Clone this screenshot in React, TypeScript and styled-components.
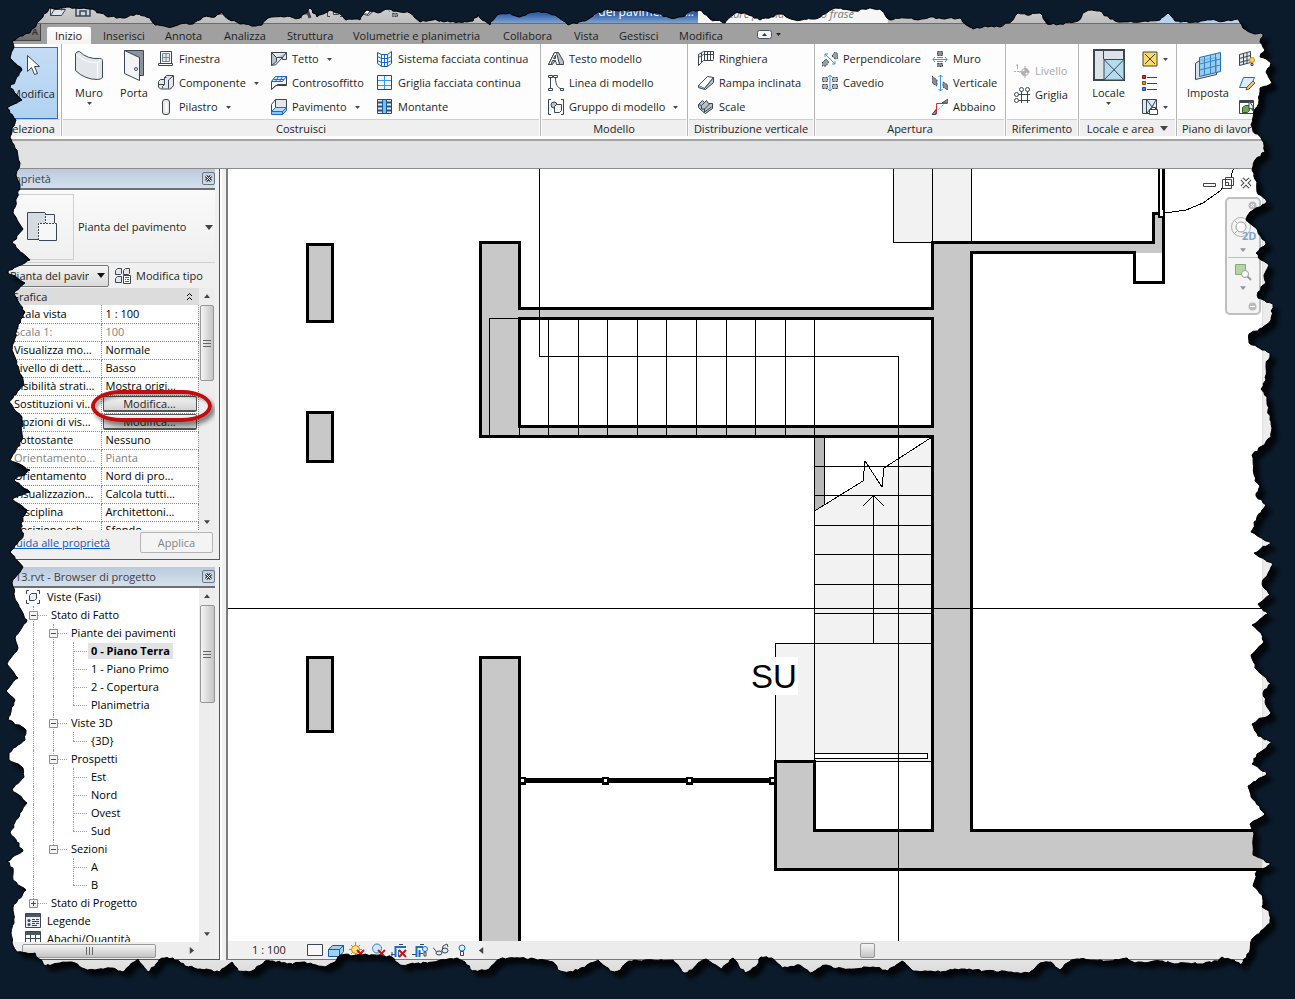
import React from "react";
import styled, { createGlobalStyle, css } from "styled-components";

const GlobalStyle = createGlobalStyle`
  * { box-sizing: border-box; }
  body { margin: 0; background: #0b1b2b; }
  body, button, select, input { font-family: "Open Sans", "Noto Sans", sans-serif; font-size: 11px; line-height: 16px; color: #1e1e1e; }
  button { border: 0; background: none; padding: 0; white-space: nowrap; }
`;

/* ---------- frame ---------- */

const Page = styled.div`
  position: relative;
  display: flex;
  flex-direction: column;
  height: 100vh;
  min-height: 720px;
  overflow: hidden;
  background: #f0f0f0;
`;

const TornOverlay = styled.svg`
  position: absolute;
  inset: 0;
  width: 100%;
  height: 100%;
  pointer-events: none;
`;

/* ---------- title bar and tabs ---------- */

const TitleBar = styled.header`
  display: flex;
  align-items: flex-end;
  flex: none;
  height: 24px;
  padding-left: 50px;
  background: linear-gradient(#d8d8d8, #bdbdbd);
  border-bottom: 1px solid #6c6c6c;
  overflow: hidden;
`;

const QuickAccess = styled.div`
  display: flex;
  align-items: flex-start;
  flex: none;
  width: 438px;
  height: 22px;
`;

const TitleGap = styled.span<{ $w: number }>`
  flex: none;
  width: ${(p) => p.$w}px;
`;

const DocTitle = styled.div`
  flex: none;
  width: 210px;
  height: 23px;
  padding: 4px 4px 0 12px;
  text-align: right;
  color: #fff;
  font-size: 12px;
  white-space: nowrap;
  overflow: hidden;
  background: linear-gradient(#1b4a98, #2f5fa8 60%, #7ea3cf);
`;

const SearchBox = styled.input`
  flex: none;
  width: 190px;
  height: 23px;
  border: 0;
  padding: 4px 34px 0 0;
  text-align: right;
  background: #f6f6f6;
  &::placeholder { font-style: italic; color: #777; }
`;

const TitleSpacer = styled.div`
  flex: 1;
`;

const WindowControls = styled.div`
  flex: none;
  width: 138px;
  height: 23px;
  background: #b9d3ef;
`;

const TabBar = styled.nav`
  display: flex;
  align-items: flex-end;
  flex: none;
  height: 20px;
  background: #a0a0a0;
`;

const AppMenu = styled.button`
  align-self: flex-start;
  width: 41px;
  height: 17px;
  margin-right: 6px;
  padding-right: 2px;
  text-align: right;
  font-size: 9px;
  font-weight: 700;
  color: #333;
  background: linear-gradient(#8b8b8b, #6d6d6d);
  border-right: 1px solid #444;
  border-bottom: 1px solid #444;
`;

const Tab = styled.button<{ $w: number; $active?: boolean }>`
  width: ${(p) => p.$w}px;
  height: 17px;
  text-align: left;
  padding-left: 8px;
  ${(p) => p.$active && css`
    width: 44px;
    margin-right: ${p.$w - 44}px;
    background: linear-gradient(#fdfdfd, #f3f3f3);
    border-radius: 2px 2px 0 0;
  `}
`;

const RibbonToggle = styled.button`
  display: flex;
  align-items: center;
  gap: 4px;
  height: 20px;
`;

/* ---------- ribbon ---------- */

const Ribbon = styled.section`
  display: flex;
  flex: none;
  height: 97px;
  padding-bottom: 3px;
  background: #fdfdfd;
  border-bottom: 2px solid #a3a3a3;
`;

const Panel = styled.div<{ $w?: number }>`
  display: flex;
  flex-direction: column;
  ${(p) => (p.$w ? `flex: none; width: ${p.$w}px;` : "flex: 1;")}
  border-right: 1px solid #b4b4b4;
  overflow: hidden;
`;

const PanelBody = styled.div<{ $cols: string; $inset?: number }>`
  display: grid;
  grid-template-columns: ${(p) => p.$cols};
  flex: 1;
  padding: 3px 0 0 ${(p) => p.$inset ?? 0}px;
`;

const PanelLabel = styled.div<{ $left?: boolean }>`
  display: flex;
  align-items: center;
  justify-content: ${(p) => (p.$left ? "flex-start" : "center")};
  gap: 6px;
  height: 17px;
  margin: 0 1px;
  padding: 1px 4px 0;
  background: #efefef;
  border-top: 1px solid #cfcfcf;
  white-space: nowrap;
`;

const ToolColumn = styled.div<{ $tight?: boolean; $center?: boolean }>`
  display: flex;
  flex-direction: column;
  justify-content: ${(p) => (p.$center ? "center" : "flex-start")};
  padding-left: ${(p) => (p.$tight ? 0 : 6)}px;
`;

const ToolButton = styled.button<{ $disabled?: boolean }>`
  display: flex;
  align-items: center;
  gap: 5px;
  height: 24px;
  ${(p) => p.$disabled && css`color: #a9a9a9;`}
`;

const ToolLabel = styled.span<{ $menu?: boolean }>`
  padding-right: ${(p) => (p.$menu ? 3 : 0)}px;
`;

const BigButton = styled.button<{ $selected?: boolean }>`
  display: flex;
  flex-direction: column;
  align-items: center;
  height: 72px;
  padding-top: 2px;
  ${(p) =>
    p.$selected &&
    css`
      padding-left: 8px;
      background: linear-gradient(#c4dcf4, #b0d2f2);
      border: 1px solid #2c6fbf;
    `}
`;

const BigLabel = styled.span`
  margin: 4px 0 1px;
`;

const OptionsBar = styled.div`
  flex: none;
  height: 28px;
  background: #e1e2e4;
  border-bottom: 1px solid #8b8b8b;
`;

/* ---------- workspace ---------- */

const Workspace = styled.main`
  display: flex;
  flex: 1;
  min-height: 0;
`;

const Dock = styled.aside`
  display: flex;
  flex-direction: column;
  flex: none;
  gap: 7px;
  width: 220px;
`;

const DockPanel = styled.section<{ $h?: number }>`
  display: flex;
  flex-direction: column;
  min-height: 0;
  ${(p) => (p.$h ? `flex: none; height: ${p.$h}px;` : "flex: 1;")}
  padding-right: 4px;
  border-right: 1px solid #555;
  border-bottom: 1px solid #555;
  background: #f0f0f0;
`;

const DockTitle = styled.h2<{ $pad: number }>`
  display: flex;
  align-items: center;
  justify-content: space-between;
  flex: none;
  height: 21px;
  margin: 0;
  padding: 0 0 0 ${(p) => p.$pad}px;
  font-size: 11px;
  font-weight: 400;
  color: #404040;
  background: linear-gradient(#bccbdc, #d3e1ee);
  border-bottom: 2px solid #6f6f6f;
`;

const CloseButton = styled.button`
  display: flex;
  align-items: center;
  justify-content: center;
  width: 13px;
  height: 13px;
  border: 1px solid #6a7684;
  border-radius: 2px;
`;

const TypeSelector = styled.div`
  display: flex;
  align-items: center;
  flex: none;
  height: 73px;
  padding: 2px 2px 0 0;
  border-bottom: 1px solid #cfcfcf;
  background: linear-gradient(#fafafa, #efefef);
`;

const TypePreview = styled.div`
  display: flex;
  align-items: center;
  width: 74px;
  height: 66px;
  padding-left: 24px;
  border: 1px solid #cfcfcf;
`;

const TypeName = styled.span`
  flex: 1;
  padding-left: 4px;
`;

const InstanceRow = styled.div`
  display: flex;
  align-items: center;
  flex: none;
  gap: 6px;
  height: 25px;
  padding-left: 8px;
`;

const SelectWrap = styled.label`
  position: relative;
  display: flex;
  align-items: center;
  svg { position: absolute; right: 4px; pointer-events: none; }
`;

const InstanceSelect = styled.select`
  appearance: none;
  width: 101px;
  height: 22px;
  padding: 0 19px 0 1px;
  border: 1px solid #777;
  border-radius: 2px;
  background: linear-gradient(#f4f4f4, #dadada);
`;

const PropArea = styled.div`
  display: flex;
  flex: 1;
  min-height: 0;
  overflow: hidden;
`;

const PropList = styled.div`
  position: relative;
  flex: 1;
  background: #fff;
`;

const PropTable = styled.table`
  width: 100%;
  table-layout: fixed;
  border-collapse: collapse;
`;

const GroupHead = styled.th`
  height: 17px;
  padding: 0 5px 0 11px;
  background: #dcdcdc;
  text-align: left;
  font-weight: 400;
  > div { display: flex; align-items: center; justify-content: space-between; }
`;

const PropCell = styled.td<{ $dim?: boolean; $label?: boolean }>`
  height: 18px;
  padding: ${(p) => (p.$label ? "0 2px 0 14px" : "0 1px 0 4px")};
  border-bottom: 1px dotted #888;
  border-right: 1px dotted #888;
  color: ${(p) => (p.$dim ? "#808080" : "#000")};
  line-height: 16px;
  white-space: nowrap;
  overflow: hidden;
`;

const EditButton = styled.button`
  display: block;
  width: 94px;
  height: 16px;
  margin-left: -3px;
  line-height: 13px;
  border: 1px solid #555;
  border-bottom-width: 2px;
  border-radius: 2px;
  background: linear-gradient(#f2f2f2, #d4d4d4);
`;

const Highlight = styled.div`
  position: absolute;
  left: 91px;
  top: 102px;
  width: 121px;
  height: 32px;
  border: 4px solid #c00d0d;
  border-radius: 30px / 16px;
  box-shadow: 3px 4px 4px rgba(0, 0, 0, 0.45), inset 3px 3px 3px rgba(0, 0, 0, 0.3);
  pointer-events: none;
`;

const PropFooter = styled.div`
  display: flex;
  align-items: center;
  justify-content: space-between;
  flex: none;
  height: 29px;
  padding: 0 2px 4px 8px;
  a { color: #0a5bc4; }
`;

const ApplyButton = styled.button`
  width: 73px;
  height: 21px;
  border: 1px solid #b5b5b5;
  border-radius: 2px;
  background: #f4f4f4;
  color: #838383;
`;

const VScroll = styled.div`
  display: flex;
  flex-direction: column;
  align-items: center;
  flex: none;
  width: 16px;
  padding: 6px 0;
  gap: 7px;
  background: #ededed;
`;

const Thumb = styled.div<{ $w: number; $h: number; $side?: boolean }>`
  display: flex;
  align-items: center;
  justify-content: center;
  width: ${(p) => p.$w}px;
  height: ${(p) => p.$h}px;
  border: 1px solid #979797;
  border-radius: 2px;
  background: linear-gradient(${(p) => (p.$side ? "90deg" : "180deg")}, #f5f5f5, #dcdcdc 50%, #c4c4c8);
`;

const Push = styled.div`
  flex: 1;
`;

const HScroll = styled.div<{ $h: number }>`
  display: flex;
  align-items: center;
  flex: none;
  height: ${(p) => p.$h}px;
  padding: 0 20px 0 22px;
  background: #ededed;
`;

/* ---------- project tree ---------- */

const TreeArea = styled.div`
  display: flex;
  flex: 1;
  min-height: 0;
  background: #fff;
  overflow: hidden;
`;

const TreeList = styled.ul`
  flex: 1;
  margin: 0;
  padding: 0;
  list-style: none;
`;

const TreeRow = styled.li<{ $root?: boolean }>`
  display: flex;
  align-items: center;
  gap: ${(p) => (p.$root ? 6 : 0)}px;
  height: 18px;
  padding-left: ${(p) => (p.$root ? 25 : 33)}px;
  white-space: nowrap;
`;

const guideHeight = { "|": "100%", T: "100%", L: "50%", " ": "0" } as const;
type Guide = keyof typeof guideHeight;

const GuideCell = styled.span<{ $kind: Guide; $end: boolean }>`
  position: relative;
  width: ${(p) => (p.$end ? 18 : 20)}px;
  height: 18px;
  &::before {
    content: "";
    position: absolute;
    left: 0;
    top: 0;
    height: ${(p) => guideHeight[p.$kind]};
    border-left: ${(p) => (p.$kind === " " ? 0 : 1)}px dotted #9c9c9c;
  }
  &::after {
    content: "";
    position: absolute;
    left: 0;
    top: 9px;
    width: ${(p) => (p.$end ? 14 : 0)}px;
    border-top: 1px dotted #9c9c9c;
  }
`;

const Expander = styled.button`
  position: absolute;
  z-index: 1;
  left: -4px;
  top: 5px;
  display: flex;
  width: 9px;
  height: 9px;
`;

const TreeText = styled.span<{ $current?: boolean }>`
  color: #000;
  ${(p) => p.$current && css`margin-left: -3px; padding: 0 3px; font-weight: 700; background: #e2e2e2;`}
`;

/* ---------- drawing view ---------- */

const Splitter = styled.div`
  flex: none;
  width: 8px;
  background: #f0f0f0;
  border-left: 2px solid #fff;
  border-right: 2px solid #7d7d7d;
`;

const View = styled.section`
  display: flex;
  flex-direction: column;
  flex: 1;
  min-width: 0;
`;

const ViewArea = styled.div`
  position: relative;
  display: flex;
  flex: 1;
  min-height: 0;
`;

const Plan = styled.svg`
  flex: 1;
  min-width: 0;
  height: 100%;
  background: #fff;
`;

const SideScroll = styled.div`
  flex: none;
  width: 33px;
  background: #ececec;
  border-left: 1px solid #dedede;
`;

const ViewButtons = styled.div`
  position: absolute;
  right: 43px;
  top: 8px;
  display: flex;
  align-items: center;
  gap: 6px;
  button { display: flex; }
`;

const NavBar = styled.div`
  position: absolute;
  right: 34px;
  top: 28px;
  display: flex;
  flex-direction: column;
  align-items: center;
  gap: 5px;
  width: 36px;
  height: 118px;
  padding: 2px 0;
  border: 2px solid #bfbfbf;
  border-radius: 5px;
  background: rgba(243, 243, 243, 0.95);
  button { display: flex; }
`;

const NavCorner = styled.button`
  align-self: flex-end;
  margin-right: 2px;
`;

const NavRule = styled.div`
  width: 30px;
  border-top: 1px solid #bfbfbf;
`;

const ViewBar = styled.div`
  display: flex;
  align-items: center;
  flex: none;
  height: 19px;
  padding-left: 24px;
  background: #f0f0f0;
  border-bottom: 1px solid #777;
`;

const ScaleButton = styled.button`
  width: 55px;
  text-align: left;
`;

const ViewIcons = styled.div`
  display: flex;
  align-items: center;
  width: 171px;
  gap: 5px;
  height: 18px;
  button { display: flex; }
`;

const ViewTrack = styled.div`
  display: flex;
  align-items: center;
  justify-content: center;
  flex: 1;
  height: 18px;
  padding-right: 46px;
  background: #ececec;
`;

const StatusBar = styled.footer`
  flex: none;
  height: 39px;
  background: linear-gradient(#e4e4e4, #c9c9c9);
`;

/* ---------- icons ---------- */

const D = "#3b4652";
const B = "#1a6fc4";
const L = "#e4e8ec";
const S = "#b9c1c9";

const glyphs: Record<string, React.ReactNode> = {
  finestra: <g fill="#fff" stroke={D}><path d="M2.5.5h11v12h-11z" /><path d="M.5 12.500h14v2H.5z" /><path d="M4.5 2.500h7v8h-7z" fill={L} stroke="#7b8793" /><path d="M8 2.500v8M4.500 6.500h7" stroke="#7b8793" /></g>,
  componente: <g fill={L} stroke={D}><path d="M.5 6.500l2-2h4v-2l2-2h7v10l-3 3.500h-10l-2-2z" /><path d="M6.500 4.500v5h-6M6.500 9.500l-2 2v2M8.500 2.500h-2v2M10.500 5v8.500M10.500 5l4.500-4" fill="none" /></g>,
  pilastro: <g fill={L} stroke={D}><rect x="4.500" y=".5" width="7" height="15" rx="2.500" /><path d="M8.500 3v10" stroke="#fff" strokeWidth="2" /></g>,
  tetto: <g stroke={D}><path d="M.5 1.500h15v7h-4v-2l-7 7.500h-4z" fill={L} /><path d="M.5 1.500l5 5v4l-5 4zM5.500 6.500h6l4-5" fill={S} /></g>,
  controsoffitto: <g stroke={D}><path d="M.5 14.500v-8l4-5h11v8h-9z" fill="#f1f3f5" /><path d="M.5 6.500l4-5h11l-4 5z" fill="#d5e9f8" stroke={B} /><path d="M3 4.500h10M7.500 1.500l-3 5M11.500 1.500l-3 5" stroke={B} fill="none" /><path d="M.5 14.500l4-4h11V2" fill="none" /></g>,
  pavimento: <g stroke={D}><path d="M4.500.5h11v8h-11z" fill={L} /><path d="M.5 12.500l4-4h11l-4 4z" fill="#b9ddf6" stroke={B} /><path d="M.5 12.500h11v3H.5zM11.500 12.500l4-4v3l-4 4z" fill="#8cc4ee" stroke={B} /><path d="M4.500.5l-4 5v7" fill="none" /></g>,
  sistema: <g fill="none" stroke={B}><path d="M.5 1.500l4 2h6l4-3v12l-4 3h-6l-4-3z" fill="#eef6fc" stroke="#155a9f" /><path d="M4.500 3.500v12M7.500 3.500v12M10.500 3.500v12M.5 5.500l4 2h6l4-2M.5 9.500l4 2h6l4-2" /></g>,
  griglia2: <g fill="none"><path d="M.5.5h14v14H.5z" fill="#f2f5f8" stroke={D} /><path d="M7.500 1v13M1 5.500h13M1 10.500h13" stroke="#3b97e8" /></g>,
  montante: <g fill="none"><path d="M.5.5h14v14H.5z" fill="#e6edf4" stroke={D} /><path d="M1 3.500h13M1 7.500h13M1 11.500h13" stroke="#29527a" strokeWidth="2" /><path d="M5.500.5h4v14h-4z" fill="#7cbcf0" stroke="#155a9f" /></g>,
  testo: <g><path d="M.5 13.500l6-12h4l5 9v3h-4l-1-3h-4l-2 3z" fill={S} stroke={D} /><path d="M.5 13.500l6-12h2l3 12h-3l-1-4h-3l-1.500 4zM5.500 7.500h2V4z" fill="#fff" stroke={D} /></g>,
  linea: <g fill="none" stroke={D}><path d="M2.500 3v10M7.500 3c0 6 2 10 6 11" /><path d="M.5.500h4v2h-4zM.5 13.500h4v2h-4zM5.500.500h4v2h-4zM12.500 13.500h3v2h-3z" fill="#fff" /></g>,
  gruppo: <g fill="none" stroke={D}><path d="M3 .5H.5v15H3M13 .5h2.500v15H13" /><circle cx="6" cy="6" r="3" fill={S} /><path d="M6.500 7.500l2-2h5v6l-2 2h-5z" fill="#f2f4f6" /></g>,
  ringhiera: <g fill="none" stroke={D}><path d="M.5 3.500l5-3h10M.5 6.500l5-3h10M.5 3.500v11M3.500 2v10M6.500.5v9M9.500.5v9M12.500.5v9M15.500.5v8M.5 14.500l5-5h10" /></g>,
  rampa: <g stroke={D}><path d="M.5 10.500l9-9 6 1-9 11z" fill="#fff" /><path d="M6.500 13.500l9-11v5l-8 7zM.5 10.500v2l6 2v-1" fill={S} /></g>,
  scale: <g stroke={D}><path d="M.5 5.500l4-4 2 2 2-2 2 3h4v5l-7 5-3-2-4-4z" fill={S} /><path d="M.5 5.500l3 1 4-4M3.500 7v3l3 0 5-5M6.500 10v3l7-5" fill="none" /></g>,
  perpendicolare: <g><path d="M10 5l3-4 3 2v4l-3 1zM0 12l4-4 3 3-3 4H0z" fill="#9a9fa5" stroke={D} strokeDasharray="2 1" /><path d="M3 3l10 10M3 6V3h3M10 13h3v-3" fill="none" stroke="#3b97e8" /></g>,
  cavedio: <g><path d="M.5 2.500h5v4h-5zM10.500 2.500h5v4h-5zM.5 9.500h5v4h-5zM10.500 9.500h5v4h-5z" fill="#b5b9be" stroke={D} strokeDasharray="2 1" /><path d="M8 0v16M6 2l2-2 2 2M6 14l2 2 2-2" fill="none" stroke="#3b97e8" /></g>,
  muroA: <g><path d="M5.500.5h5v4h-5zM5.500 12.500h5v3h-5z" fill="#8a8f95" stroke={D} strokeDasharray="2 1" /><path d="M1 8.500h14M3 6L1 8.500 3 11M13 6l2 2.500-2 2.500M5 6.500h6M5 10.500h6" fill="none" stroke="#3b97e8" /></g>,
  verticale: <g><path d="M0 1l5 4v6L0 8zM11 7l5 3v5l-5-3z" fill="#8a8f95" stroke={D} strokeDasharray="2 1" /><path d="M8.500 0v16M6.500 2l2-2 2 2M6.500 14l2 2 2-2" fill="none" stroke="#3b97e8" /></g>,
  abbaino: <g fill="none"><path d="M0 15.500l4-5v5zM10 4l6-4v4z" fill="#9a9fa5" stroke={D} /><path d="M4.500 15V4.500H15" stroke="#d03030" /><path d="M6 11l6-6" stroke="#888" strokeDasharray="1 1" /></g>,
  livello: <g stroke="#b0b0b0" fill="none"><path d="M0 8.500h8" strokeDasharray="2 1" /><path d="M2 2.500l1.500-1V6" /><circle cx="11" cy="9" r="3.500" /><path d="M11 5.500V9h3.500A3.500 3.500 0 0011 5.500zM11 9v3.500A3.500 3.500 0 017.500 9z" fill="#b0b0b0" /><path d="M5 9h11M11 3v12" /></g>,
  griglia: <g stroke={D} fill="none"><circle cx="7.500" cy="2.500" r="2" /><circle cx="13.500" cy="2.500" r="2" /><circle cx="2.500" cy="7.500" r="2" /><circle cx="2.500" cy="13.500" r="2" /><path d="M7.500 4.500V16M13.500 4.500V16M4.500 7.500H16M4.500 13.500H16" /></g>,
  area: <g><path d="M1 1h14v14H1z" fill="#ffd95a" stroke={D} /><path d="M3 3l10 10M13 3L3 13" stroke={D} /></g>,
  legenda: <g><path d="M.5.5h3v3h-3z" fill="#e03030" stroke="#7d1515" /><path d="M.5 6.500h3v3h-3z" fill="#f08a20" stroke="#8a4a10" /><path d="M.5 12.500h3v3h-3z" fill="#4a90e0" stroke="#1a4a8a" /><path d="M5 2.500h10M5 8.500h10M5 14.500h10" stroke={D} /></g>,
  etichetta: <g><path d="M.5.5h14v14H.5zM4.500.5v14" fill="#dbeaf4" stroke={D} /><path d="M5 1l5 7 4-7M5 14l4-5" fill="none" stroke={D} /><path d="M7.500 10.500h8v5h-8zM9.500 10.500v-2h4v2" fill="#fff" stroke={D} /></g>,
  mostra: <g fill={L} stroke={D}><path d="M.5 3.500l11-3v11l-11 3zM.5 7.500l11-3M4.500 2.500v11M8 1.500v11M.5 11.500l11-3" /><circle cx="13" cy="9" r="2.500" fill="#ffd34d" stroke="#e08a10" /><path d="M12 12.500h2v2h-2z" /></g>,
  matita: <g><path d="M4.500 2.500h11l-4 10H.5z" fill="#d9ecf9" stroke={B} /><path d="M7 15l1-3 6-6 2 2-6 6z" fill="#f3c36a" stroke="#7a5520" /></g>,
  visualizzatore: <g><path d="M.5 1.500h14v13H.5z" fill="#fff" stroke={D} /><path d="M1 2h13v2H1z" fill={D} /><path d="M3.500 8.500l3-2h4v5l-2 2h-5z" fill="#6aa84f" stroke="#2f5e20" /><path d="M10 2l5 7h-2l1 3-2-3-2 1z" fill="#fff" stroke={D} /></g>,
  tipo: <g fill={L} stroke={D}><path d="M.5 2.500l2-2h4v5l-1 1h-5zM8.500 2.500l2-2h4v5l-1 1h-5zM.5 10.500l2-2h4v6h-6z" /><path d="M8.500 7.500h7v8h-7z" fill="#fff" /><path d="M10 9.500h4M10 11.500h1M12 11.500h2M10 13.500h4" stroke={B} /></g>,
  viste: <g fill="none" stroke={D}><path d="M4 1.500H1.500V5M12 1.500h2.500V5M4 14.500H1.500V11M12 14.500h2.500V11" /><path d="M4.500 6.500l2-2h5v5l-2 2h-5z" fill="#eee" /></g>,
  legende: <g><path d="M.5.5h15v14H.5z" fill="#e9ecf0" stroke={D} /><path d="M1 1h14v3H1z" fill="#4b5563" /><circle cx="4" cy="7.500" r="1.500" fill={D} /><circle cx="4" cy="11.500" r="1.500" fill={D} /><path d="M7 6.500h3M11 6.500h3M7 8.500h7M7 10.500h3M11 10.500h3M7 12.500h5" stroke={D} /></g>,
  abachi: <g><path d="M.5.5h15v15H.5z" fill="#fff" stroke={D} /><path d="M1 1h14v3H1z" fill="#4b5563" /><path d="M5.500 4v11M1 7.500h14M1 11.500h14M10.500 4v11" stroke={D} /></g>,
  foglio: <path d="M.5 2.500h15v11H.5z" fill="#f7f7fa" stroke={D} />,
  cubo: <g fill="#9fd0f2" stroke="#155a9f"><path d="M.5 7.500l4-4h11v6l-4 5H.5z" /><path d="M.5 7.500h11v7M11.500 7.500l4-4" fill="none" /></g>,
  sole: <g><path d="M6.500 0v15M0 7.500h13M2 3l9 9M11 3l-9 9" stroke="#c98a00" /><circle cx="6.500" cy="7.500" r="4" fill="#ffe28a" stroke="#c98a00" /><path d="M8 8l7 7M15 8l-7 7" stroke="#c01818" strokeWidth="2" /></g>,
  ombra: <g><ellipse cx="6" cy="13.500" rx="5" ry="1.500" fill="#777" /><circle cx="7" cy="6.500" r="4.500" fill="#cfe7f8" stroke="#3a7fc0" /><path d="M8 8l7 7M15 8l-7 7" stroke="#c01818" strokeWidth="2" /></g>,
  taglia: <g fill="none"><path d="M0 12.500h4M12 2.500H8M1 10v4" stroke={D} /><path d="M4.500 15V5H15" stroke={B} strokeWidth="2" /><path d="M7.500 15V8" stroke={B} /><path d="M8 8l7 7M15 8l-7 7" stroke="#c01818" strokeWidth="2" /></g>,
  regione: <g fill="none"><path d="M0 12.500h4M12 2.500H8" stroke={D} /><path d="M4.500 15V5H11M7.500 15V8" stroke={B} strokeWidth="2" /><path d="M7 11.500h4" stroke="#c01818" /><circle cx="13" cy="7" r="2.500" fill="#dff0fd" stroke={B} /><path d="M12 10h2v4h-2z" stroke={D} /></g>,
  occhiali: <g fill="#dcebf2" stroke={D}><path d="M0 5.500l4 5M9 9l1-5 4-2 1 3" fill="none" /><ellipse cx="6" cy="11" rx="3" ry="2" /><ellipse cx="12" cy="8.500" rx="3" ry="2.500" /></g>,
  lampada: <g><circle cx="8" cy="6" r="3" fill="#dff0fd" stroke={B} /><path d="M6.500 9.500h3v4h-3z" fill="#fff" stroke={D} /></g>,
  apri: <path d="M.5 14.500v-10h4l2 2h5v3M.5 14.500l4-6h11l-4 6z" fill="#dfe3e8" stroke={D} />,
  salva: <path d="M1 1h14v14H1zM4 1v6h8V1M5 15v-5h6v5" fill="#c9d3de" stroke={D} strokeWidth="1.500" />,
  aperto: <path d="M1 1h9M4 4h8l3 6-4 6" fill="#eee" stroke="#888" />,
};

const Icon = ({ name, size = 16 }: { name: string; size?: number }) => (
  <svg width={size} height={size} viewBox="0 0 16 16" aria-hidden="true">{glyphs[name]}</svg>
);

const Arrow = ({ w = 5, dir = "down", color = "#444" }: { w?: number; dir?: string; color?: string }) => {
  const paths: Record<string, string> = { down: "M0 0h8L4 5z", up: "M0 5h8L4 0z", left: "M6 0v8L1 4z", right: "M2 0v8l5-4z" };
  const tall = dir === "left" || dir === "right";
  return (
    <svg width={w} height={tall ? w : Math.ceil(w * 0.6)} viewBox={tall ? "0 0 8 8" : "0 0 8 5"} aria-hidden="true">
      <path d={paths[dir]} fill={color} />
    </svg>
  );
};

const Cross = () => (
  <svg width="9" height="9" viewBox="0 0 9 9" aria-hidden="true">
    <path d="M2 2l5 5M7 2l-5 5" stroke="#333" strokeWidth="3" />
    <path d="M2 2l5 5M7 2l-5 5" stroke="#eef3f8" strokeWidth="1" />
  </svg>
);

const MuroIcon = () => (
  <svg width="30" height="32" viewBox="0 0 30 32" aria-hidden="true">
    <path d="M1.500 4.500q1-2 4-2 8 8 20 7 3 0 3 2v17q-2 2-5 2-13 0-22-9z" fill="#e3e7eb" stroke={D} />
    <path d="M2.500 5.500q9 9 21 8l4-3M23.500 13v16" fill="none" stroke="#fff" />
  </svg>
);
const PortaIcon = () => (
  <svg width="22" height="32" viewBox="0 0 22 32" aria-hidden="true">
    <path d="M1.500 1.500h19v25h-4z" fill="#8a949f" stroke={D} />
    <path d="M1.500 1.500l15 7v23l-15-7z" fill="#f1f3f5" stroke={D} />
    <circle cx="13" cy="20" r="1.500" fill="#fff" stroke={D} />
  </svg>
);
const CursorIcon = () => (
  <svg width="16" height="32" viewBox="0 0 16 32" aria-hidden="true">
    <path d="M2.500 5.500v16l4-4 3 7 3-1-3-7h5z" fill="#fff" stroke={D} />
  </svg>
);
const LocaleIcon = () => (
  <svg width="32" height="32" viewBox="0 0 32 32" aria-hidden="true">
    <path d="M1 1h30v30H1z" fill="#dfe3e7" stroke={D} strokeWidth="2" />
    <path d="M11 10.500h20V31H11z" fill="#b5dcee" stroke={D} />
    <path d="M11 10.500L31 31M31 10.500L11 31M10.500 1v9" stroke={D} />
  </svg>
);
const ImpostaIcon = () => (
  <svg width="28" height="32" viewBox="0 0 28 32" aria-hidden="true">
    <path d="M1.500 14.500l4-3 17-3v17l-21 5z" fill="#d6e2ee" stroke={D} />
    <path d="M5.500 8.500l21-5v19l-21 5z" fill="#8cc6ee" fillOpacity=".8" stroke="#1f6cae" />
    <path d="M10.500 7v19M16.500 6v19M21.500 5v19M5.500 15l21-5M5.500 21l21-5" stroke="#2f86cc" fill="none" />
  </svg>
);

/* ---------- data ---------- */

const tabs: [string, number][] = [
  ["Inizio", 48], ["Inserisci", 62], ["Annota", 59], ["Analizza", 63], ["Struttura", 66],
  ["Volumetrie e planimetria", 150], ["Collabora", 71], ["Vista", 45], ["Gestisci", 60], ["Modifica", 86],
];

type Tool = { icon: string; label?: string; menu?: boolean; off?: boolean };

const Tools = ({ items, tight, center }: { items: Tool[]; tight?: boolean; center?: boolean }) => (
  <ToolColumn $tight={tight} $center={center}>
    {items.map((t) => (
      <ToolButton key={t.icon} $disabled={t.off} aria-label={t.label ?? t.icon}>
        <Icon name={t.icon} />
        {t.label && <ToolLabel $menu={t.menu}>{t.label}</ToolLabel>}
        {t.menu && <Arrow />}
      </ToolButton>
    ))}
  </ToolColumn>
);

const properties: { label: string; value: string; dim?: boolean; edit?: boolean }[] = [
  { label: "Scala vista", value: "1 : 100" },
  { label: "Scala  1:", value: "100", dim: true },
  { label: "Visualizza mo...", value: "Normale" },
  { label: "Livello di dett...", value: "Basso" },
  { label: "Visibilità strati...", value: "Mostra origi..." },
  { label: "Sostituzioni vi...", value: "Modifica...", edit: true },
  { label: "Opzioni di vis...", value: "Modifica...", edit: true },
  { label: "Sottostante", value: "Nessuno" },
  { label: "Orientamento...", value: "Pianta", dim: true },
  { label: "Orientamento", value: "Nord di pro..." },
  { label: "Visualizzazion...", value: "Calcola tutti..." },
  { label: "Disciplina", value: "Architettoni..." },
  { label: "Posizione sch...", value: "Sfondo" },
];

const tree: { guides: string; text: string; box?: "-" | "+"; current?: boolean; icon?: string }[] = [
  { guides: "", text: "Viste (Fasi)", icon: "viste" },
  { guides: "T", text: "Stato di Fatto", box: "-" },
  { guides: "|T", text: "Piante dei pavimenti", box: "-" },
  { guides: "||T", text: "0 - Piano Terra", current: true },
  { guides: "||T", text: "1 - Piano Primo" },
  { guides: "||T", text: "2 - Copertura" },
  { guides: "||L", text: "Planimetria" },
  { guides: "|T", text: "Viste 3D", box: "-" },
  { guides: "||L", text: "{3D}" },
  { guides: "|T", text: "Prospetti", box: "-" },
  { guides: "||T", text: "Est" },
  { guides: "||T", text: "Nord" },
  { guides: "||T", text: "Ovest" },
  { guides: "||L", text: "Sud" },
  { guides: "|L", text: "Sezioni", box: "-" },
  { guides: "| T", text: "A" },
  { guides: "| L", text: "B" },
  { guides: "L", text: "Stato di Progetto", box: "+" },
  { guides: "", text: "Legende", icon: "legende" },
  { guides: "", text: "Abachi/Quantità", icon: "abachi" },
];

/* ---------- floor plan ---------- */

const stairX = [548.5, 578.5, 607.5, 637.5, 666.5, 696.5, 726.5, 755.5, 785.5, 814.5];
const stairY = [466.5, 495.5, 525.5, 554.5, 584.5, 613.5, 643.5];

const FloorPlan = () => (
  <Plan role="img" aria-label="Pianta del pavimento">
    <g transform="translate(-228 -169)" fill="none" stroke="#000" shapeRendering="crispEdges">
      <path d="M893.5 160V242.500H971.500V160" fill="#f2f2f2" />
      <path d="M932.5 160V242" />
      <path d="M814.5 511L863 481 865 461 882 487 884 468 932 437V761H775.500V643.500H814.500z" fill="#f2f2f2" stroke="none" />
      <path d="M815 437H824.500V505L815 511z" fill="#b8b8b8" stroke="none" />

      <g fill="#c8c8c8" stroke="none">
        <path d="M480.5 242.500H519.500V308.500H932.500V242.500H1153.500V213.500H1163.500V252.500H971.500V830.500H1262V869.500H775.500V761.500H814.500V830.500H932.500V436.500H480.500z" />
        <path d="M480.5 657.500H519.500V960H480.500z" />
      </g>
      <path d="M519.5 318.500H932.500V426.500H519.500z" fill="#fff" stroke="none" />
      <path d="M1134.5 252.500H1163.500V282.500H1134.500z" fill="#fff" stroke="none" />

      <g strokeWidth="3" strokeLinecap="square">
        <path d="M932.5 308.500H519.500V242.500H480.500V436.500H932.500V830.500H814.500V761.500H775.500V869.500H1270" />
        <path d="M932.5 308.500V242.500H1153.500V213.500H1158.500M1270 830.500H971.500V252.500H1134.500V282.500H1163.500V160" />
        <path d="M519.5 318.500H932.500V426.500H519.500z" />
        <path d="M480.5 960V657.500H519.500V960" />
        <path d="M307.5 244.500h25v77h-25zM307.500 412.500h25v49h-25zM307.500 657.500h25v74h-25z" fill="#c8c8c8" />
      </g>
      <path d="M1159 160V217H1163" fill="#fff" strokeWidth="2" />

      <path d="M539.5 160V356.500H898.500V960" />
      <path d="M489.5 436V318.500H519M519.500 428V436" />
      {stairX.map((x) => <path key={x} d={`M${x} 318V436`} />)}
      {stairY.map((y) => <path key={y} d={`M814 ${y}H932`} />)}
      <path d="M814.5 436V761.500H932M824.500 436V505M931.500 466V643M775.500 761V643.500H815" />
      <path d="M814.5 753.500H927.500V758.500H814.500z" fill="#fff" />
      <path d="M898.5 750V762" />
      <path d="M873.5 643V495.500M863 506L873.500 495.500 884 506" />
      <path d="M814.5 511L863 481 865 461 882 487 884 468 932 437" />
      <path d="M228 608.500H1270" />
      <path d="M1165 213L1186 210 1203 203 1220 191 1231 177 1234 166" />

      <path d="M522 778H775V783H522z" fill="#000" stroke="none" />
      {[519, 602, 686, 769].map((x) => (
        <g key={x} stroke="none">
          <path d={`M${x} 777h7v8h-7z`} fill="#000" />
          <path d={`M${x + 2} 779h3v3h-3z`} fill="#fff" />
        </g>
      ))}
      <path d="M775 657h23v38h-23z" fill="#fff" stroke="none" />
      <text x="751" y="688" fill="#000" stroke="none" fontFamily="Liberation Sans, Arial, sans-serif" fontSize="33">SU</text>
    </g>
  </Plan>
);

/* ---------- torn paper edge ---------- */

const tear =
  "12,41 20,36 30,33 38,22 43,17 49,8 57,9 67,7 75,8 90,9 100,13 108,17 125,18 136,14 150,18 155,25 172,27 180,24 193,24 203,17 215,17 222,12 228,19 240,24 256,26 262,25 268,18 284,17 300,18 310,8 317,17 330,10 338,13 346,20 360,20 367,10 378,13 390,9 400,12 410,13 420,22 433,20 450,22 473,21 478,14 482,20 490,25 497,15 510,13 520,17 535,12 548,13 555,15 568,25 585,21 595,14 607,9 620,11 640,10 655,13 670,18 685,16 693,10 702,11 710,19 725,23 735,13 745,13 760,20 780,14 795,20 815,19 825,14 835,8 855,11 863,9 880,9 885,15 890,20 905,18 918,20 930,17 945,19 960,18 965,24 973,29 985,26 1000,27 1012,21 1018,13 1030,15 1040,13 1047,24 1060,24 1078,21 1085,12 1092,10 1100,11 1110,19 1122,22 1145,21 1160,20 1168,13 1175,21 1195,22 1210,20 1225,21 1238,19 1243,28 1252,33 1263,34 " +
  "1260,42 1265,50 1260,57 1271,63 1266,72 1272,83 1260,88 1259,100 1254,112 1251,125 1253,130 1262,140 1265,152 1255,160 1252,170 1257,182 1257,192 1267,202 1250,212 1246,220 1256,228 1266,244 1256,253 1261,260 1269,265 1264,275 1266,283 1258,292 1258,298 1273,304 1271,320 1262,328 1249,334 1249,343 1262,350 1270,353 1266,365 1266,380 1261,389 1267,397 1268,410 1272,428 1271,437 1262,446 1252,455 1255,481 1260,486 1256,496 1266,505 1257,517 1251,532 1271,543 1254,553 1273,564 1270,570 1262,584 1270,595 1258,604 1268,614 1252,625 1261,633 1264,642 1251,655 1257,670 1271,683 1263,693 1267,707 1271,713 1252,724 1258,736 1272,743 1257,754 1252,764 1267,774 1248,786 1251,797 1265,814 1250,824 1254,834 1253,855 1271,864 1257,871 1253,886 1262,895 1262,907 1269,911 1270,923 1252,939 1250,950 1241,965 " +
  "1234,960 1222,957 1218,961 1203,964 1186,963 1171,963 1160,961 1135,963 1127,958 1106,961 1077,959 1067,963 1060,970 1051,962 1040,963 1029,973 1008,972 984,971 961,969 935,972 913,971 902,961 888,971 873,967 849,969 833,968 826,965 810,973 800,965 782,968 772,958 761,957 755,967 745,973 733,958 722,969 706,959 698,963 692,970 684,973 673,960 645,960 629,961 618,971 610,971 598,960 587,965 573,972 560,971 553,962 535,959 520,958 500,959 487,970 472,971 465,962 457,958 433,962 400,965 392,957 380,955 360,955 340,955 335,962 325,967 305,962 287,964 273,961 265,961 252,971 238,971 232,962 220,972 200,969 185,966 173,958 162,958 148,972 138,959 123,972 110,968 95,970 85,969 72,962 60,963 45,966 35,953 17,952 " +
  "12,943 11,933 14,923 13,907 26,890 13,880 13,868 7,861 23,851 10,832 27,803 12,789 24,777 23,768 9,760 9,753 25,740 26,730 8,720 15,700 6,691 18,678 7,664 18,648 15,638 27,620 17,602 12,583 23,567 10,552 23,537 21,523 27,510 12,499 30,492 14,480 30,470 10,460 22,440 22,417 9,402 24,385 12,350 18,327 25,312 14,293 25,283 7,272 30,260 12,243 23,229 13,213 20,187 16,175 20,163 17,150 10,137 16,120 7,108 22,100 10,88 22,70 10,58 14,47";

// Splits every stretch of the outline into short steps and roughens each one.
const roughen = (source: string) => {
  const pts = source.trim().split(/\s+/).map((p) => p.split(",").map(Number));
  const out: string[] = [];
  let seed = 7;
  const noise = () => {
    seed = (seed * 1103515245 + 12345) % 2147483648;
    return seed / 2147483648 - 0.5;
  };
  pts.forEach(([x, y], i) => {
    const [nx, ny] = pts[(i + 1) % pts.length];
    const steps = Math.max(1, Math.round(Math.hypot(nx - x, ny - y) / 3));
    for (let s = 0; s < steps; s++) {
      const k = s / steps;
      const j = s ? 2 : 0;
      out.push(`${(x + (nx - x) * k + noise() * j).toFixed(1)} ${(y + (ny - y) * k + noise() * j).toFixed(1)}`);
    }
  });
  return `M${out.join("L")}Z`;
};

const paper = roughen(tear);

const TornEdge = () => (
  <TornOverlay viewBox="0 0 1295 999" preserveAspectRatio="none" aria-hidden="true">
    <defs>
      <clipPath id="outside"><path d={`M0 0H1295V999H0Z${paper}`} clipRule="evenodd" /></clipPath>
      <filter id="soft" x="-5%" y="-5%" width="110%" height="110%"><feGaussianBlur stdDeviation="2" /></filter>
    </defs>
    <g clipPath="url(#outside)">
      <path d="M0 0H1295V999H0Z" fill="#0b1b2b" />
      <path d={paper} transform="translate(6 6)" fill="#000" fillOpacity=".8" filter="url(#soft)" />
    </g>
    <path d={paper} fill="none" stroke="#000" />
  </TornOverlay>
);

/* ---------- sections ---------- */

const RibbonSection = () => (
  <Ribbon>
    <Panel $w={62}>
      <PanelBody $cols="58px">
        <BigButton $selected><CursorIcon /><BigLabel>Modifica</BigLabel></BigButton>
      </PanelBody>
      <PanelLabel>Seleziona</PanelLabel>
    </Panel>
    <Panel $w={479}>
      <PanelBody $cols="54px 36px 113px 106px 1fr">
        <BigButton><MuroIcon /><BigLabel>Muro</BigLabel><Arrow /></BigButton>
        <BigButton><PortaIcon /><BigLabel>Porta</BigLabel></BigButton>
        <Tools items={[{ icon: "finestra", label: "Finestra" }, { icon: "componente", label: "Componente", menu: true }, { icon: "pilastro", label: "Pilastro", menu: true }]} />
        <Tools items={[{ icon: "tetto", label: "Tetto", menu: true }, { icon: "controsoffitto", label: "Controsoffitto" }, { icon: "pavimento", label: "Pavimento", menu: true }]} />
        <Tools items={[{ icon: "sistema", label: "Sistema facciata continua" }, { icon: "griglia2", label: "Griglia facciata continua" }, { icon: "montante", label: "Montante" }]} />
      </PanelBody>
      <PanelLabel>Costruisci</PanelLabel>
    </Panel>
    <Panel $w={147}>
      <PanelBody $cols="1fr" $inset={1}>
        <Tools items={[{ icon: "testo", label: "Testo modello" }, { icon: "linea", label: "Linea di modello" }, { icon: "gruppo", label: "Gruppo di modello", menu: true }]} />
      </PanelBody>
      <PanelLabel>Modello</PanelLabel>
    </Panel>
    <Panel $w={127}>
      <PanelBody $cols="1fr" $inset={4}>
        <Tools items={[{ icon: "ringhiera", label: "Ringhiera" }, { icon: "rampa", label: "Rampa inclinata" }, { icon: "scale", label: "Scale" }]} />
      </PanelBody>
      <PanelLabel>Distribuzione verticale</PanelLabel>
    </Panel>
    <Panel $w={191}>
      <PanelBody $cols="110px 1fr" $inset={1}>
        <Tools items={[{ icon: "perpendicolare", label: "Perpendicolare" }, { icon: "cavedio", label: "Cavedio" }]} />
        <Tools items={[{ icon: "muroA", label: "Muro" }, { icon: "verticale", label: "Verticale" }, { icon: "abbaino", label: "Abbaino" }]} />
      </PanelBody>
      <PanelLabel>Apertura</PanelLabel>
    </Panel>
    <Panel $w={73}>
      <PanelBody $cols="1fr" $inset={2}>
        <Tools center items={[{ icon: "livello", label: "Livello", off: true }, { icon: "griglia", label: "Griglia" }]} />
      </PanelBody>
      <PanelLabel>Riferimento</PanelLabel>
    </Panel>
    <Panel $w={98}>
      <PanelBody $cols="55px 1fr" $inset={2}>
        <BigButton><LocaleIcon /><BigLabel>Locale</BigLabel><Arrow /></BigButton>
        <Tools items={[{ icon: "area", menu: true }, { icon: "legenda" }, { icon: "etichetta", menu: true }]} />
      </PanelBody>
      <PanelLabel>Locale e area <Arrow w={8} /></PanelLabel>
    </Panel>
    <Panel>
      <PanelBody $cols="62px 1fr">
        <BigButton><ImpostaIcon /><BigLabel>Imposta</BigLabel></BigButton>
        <Tools tight items={[{ icon: "mostra" }, { icon: "matita" }, { icon: "visualizzatore" }]} />
      </PanelBody>
      <PanelLabel $left>Piano di lavoro</PanelLabel>
    </Panel>
  </Ribbon>
);

const Grip = ({ turned }: { turned?: boolean }) => (
  <svg width="8" height="8" viewBox="0 0 8 8" aria-hidden="true">
    <path d={turned ? "M1.500 0v8M4.500 0v8M7.500 0v8" : "M0 1.500h8M0 4.500h8M0 7.500h8"} stroke="#666" />
  </svg>
);

const PropertiesPanel = () => (
  <DockPanel $h={391}>
    <DockTitle $pad={3}>Proprietà<CloseButton aria-label="Chiudi"><Cross /></CloseButton></DockTitle>
    <TypeSelector>
      <TypePreview>
        <svg width="34" height="34" viewBox="0 0 34 34" aria-hidden="true">
          <path d="M2.500 2.500h18v27h-18z" fill="#d6dbe2" stroke={D} />
          <path d="M20.500 4.500h9v9h-9z" fill="#eef0f3" stroke={D} />
          <path d="M13.500 13.500h18v17h-18z" fill="#f6f7f8" stroke={D} />
          <path d="M13.500 31V13.500h18M20.500 2v11" fill="none" stroke="#fff" strokeDasharray="1 2" />
        </svg>
      </TypePreview>
      <TypeName>Pianta del pavimento</TypeName>
      <Arrow w={8} />
    </TypeSelector>
    <InstanceRow>
      <SelectWrap>
        <InstanceSelect aria-label="Istanza"><option>Pianta del pavimento</option></InstanceSelect>
        <Arrow w={8} color="#111" />
      </SelectWrap>
      <ToolButton><Icon name="tipo" />Modifica tipo</ToolButton>
    </InstanceRow>
    <PropArea>
      <PropList>
        <PropTable>
          <colgroup><col width="101" /><col /></colgroup>
          <thead>
            <tr>
              <GroupHead colSpan={2}>
                <div>
                  Grafica
                  <svg width="9" height="9" viewBox="0 0 9 9" aria-hidden="true"><path d="M2 4l2.500-2.500L7 4M2 8l2.500-2.500L7 8" fill="none" stroke="#000" /></svg>
                </div>
              </GroupHead>
            </tr>
          </thead>
          <tbody>
            {properties.map((p) => (
              <tr key={p.label}>
                <PropCell $label $dim={p.dim}>{p.label}</PropCell>
                <PropCell $dim={p.dim}>{p.edit ? <EditButton>{p.value}</EditButton> : p.value}</PropCell>
              </tr>
            ))}
          </tbody>
        </PropTable>
        <Highlight />
      </PropList>
      <VScroll>
        <Arrow w={6} dir="up" />
        <Thumb $w={14} $h={76} $side><Grip /></Thumb>
        <Push />
        <Arrow w={6} />
      </VScroll>
    </PropArea>
    <PropFooter>
      <a href="#guida">Guida alle proprietà</a>
      <ApplyButton>Applica</ApplyButton>
    </PropFooter>
  </DockPanel>
);

const BrowserPanel = () => (
  <DockPanel>
    <DockTitle $pad={15}>13.rvt - Browser di progetto<CloseButton aria-label="Chiudi"><Cross /></CloseButton></DockTitle>
    <TreeArea>
      <TreeList>
        {tree.map((row) => (
          <TreeRow key={row.text} $root={!row.guides}>
            {row.icon && <Icon name={row.icon} />}
            {row.guides.split("").map((g, i, all) => (
              <GuideCell key={i} $kind={g as Guide} $end={i === all.length - 1}>
                {row.box && i === all.length - 1 && (
                  <Expander aria-label={row.text}>
                    <svg width="9" height="9" viewBox="0 0 9 9" aria-hidden="true">
                      <path d="M.5.5h8v8h-8z" fill="#f4f4f4" stroke="#8e8e8e" />
                      <path d={row.box === "+" ? "M2 4.500h5M4.500 2v5" : "M2 4.500h5"} stroke="#2a4a9a" />
                    </svg>
                  </Expander>
                )}
              </GuideCell>
            ))}
            <TreeText $current={row.current}>{row.text}</TreeText>
          </TreeRow>
        ))}
      </TreeList>
      <VScroll>
        <Arrow w={6} dir="up" />
        <Thumb $w={15} $h={98} $side><Grip /></Thumb>
        <Push />
        <Arrow w={6} />
      </VScroll>
    </TreeArea>
    <HScroll $h={17}>
      <Thumb $w={134} $h={14}><Grip turned /></Thumb>
      <Push />
      <Arrow w={7} dir="right" />
    </HScroll>
  </DockPanel>
);

const DrawingView = () => (
  <View>
    <ViewArea>
      <FloorPlan />
      <SideScroll />
      <ViewButtons>
        <button aria-label="Riduci"><svg width="13" height="12" viewBox="0 0 13 12"><path d="M.5 6.500h12v3H.5z" fill="#fff" stroke="#444" /></svg></button>
        <button aria-label="Ripristina"><svg width="12" height="12" viewBox="0 0 12 12"><path d="M3.500.5h8v8h-8zM.5 2.500h9v9h-9z" fill="#fff" stroke="#444" /><path d="M3.500 5.500h3v3h-3z" fill="none" stroke="#444" /></svg></button>
        <button aria-label="Chiudi vista"><svg width="12" height="12" viewBox="0 0 12 12"><path d="M2 2l8 8M10 2l-8 8" stroke="#444" strokeWidth="4" /><path d="M2 2l8 8M10 2l-8 8" stroke="#fff" strokeWidth="2" /></svg></button>
      </ViewButtons>
      <NavBar>
        <NavCorner aria-label="Chiudi barra"><svg width="9" height="9" viewBox="0 0 9 9"><circle cx="4.500" cy="4.500" r="4" fill="#bbb" /><path d="M3 3l3 3M6 3L3 6" stroke="#fff" /></svg></NavCorner>
        <button aria-label="Ruota di navigazione 2D">
          <svg width="28" height="28" viewBox="0 0 28 28">
            <circle cx="12" cy="12" r="9.500" fill="#f3f3f3" stroke="#b0b0b0" />
            <circle cx="12" cy="12" r="5" fill="#fff" stroke="#a0a0a0" />
            <path d="M5 19l3-3M19 5l-3 3M5 5l3 3" stroke="#b0b0b0" />
            <text x="13" y="25" fontSize="11" fontWeight="700" fill="#7fa5cc">2D</text>
          </svg>
        </button>
        <Arrow w={6} color="#8f97a3" />
        <NavRule />
        <button aria-label="Zoom">
          <svg width="20" height="18" viewBox="0 0 20 18">
            <path d="M2.500 1.500h10v10h-10z" fill="#b9d3a6" stroke="#7fae76" />
            <circle cx="12" cy="11" r="3.500" fill="#fff" stroke="#999" />
            <path d="M14.500 13.500l3.500 3.500" stroke="#999" strokeWidth="2" />
          </svg>
        </button>
        <Arrow w={6} color="#8f97a3" />
        <Push />
        <NavCorner aria-label="Opzioni barra"><svg width="9" height="9" viewBox="0 0 9 9"><circle cx="4.500" cy="4.500" r="4" fill="#bbb" /><path d="M2 4.500h5" stroke="#fff" /></svg></NavCorner>
      </NavBar>
    </ViewArea>
    <ViewBar>
      <ScaleButton>1 : 100</ScaleButton>
      <ViewIcons>
        {["foglio", "cubo", "sole", "ombra", "taglia", "regione", "occhiali", "lampada"].map((n) => (
          <button key={n} aria-label={n}><Icon name={n} /></button>
        ))}
      </ViewIcons>
      <Arrow w={7} dir="left" />
      <ViewTrack><Thumb $w={15} $h={15} /></ViewTrack>
    </ViewBar>
  </View>
);

const TitleSection = () => (
  <TitleBar>
    <QuickAccess>
      <Icon name="apri" />
      <TitleGap $w={9} />
      <Icon name="salva" />
      <TitleGap $w={8} />
      <Icon name="aperto" />
      <TitleGap $w={94} />
      <svg width="20" height="16" viewBox="0 0 20 16" aria-hidden="true">
        <path d="M3 12l7-8 7 8z" fill="#ffc22e" stroke="#c98a00" />
        <path d="M4 13h12" stroke="#333" />
      </svg>
      <TitleGap $w={68} />
      <svg width="16" height="20" viewBox="0 0 16 20" aria-hidden="true">
        <path d="M3 17L8 3l5 14M5 12h6" fill="none" stroke={D} strokeWidth="3" />
      </svg>
      <TitleGap $w={14} />
      <Icon name="gruppo" />
      <TitleGap $w={18} />
      <Icon name="rampa" />
      <TitleGap $w={10} />
      <Icon name="muroA" />
    </QuickAccess>
    <DocTitle>Pianta del pavimento: ...</DocTitle>
    <SearchBox aria-label="Cerca" placeholder="Digitare parola chiave o frase" />
    <TitleSpacer />
    <WindowControls />
  </TitleBar>
);

export default function App() {
  return (
    <>
      <GlobalStyle />
      <Page>
        <TitleSection />
        <TabBar>
          <AppMenu>A</AppMenu>
          {tabs.map(([label, w], i) => <Tab key={label} $w={w} $active={i === 0}>{label}</Tab>)}
          <RibbonToggle aria-label="Riduci barra multifunzione">
            <svg width="15" height="9" viewBox="0 0 15 9" aria-hidden="true"><rect x=".5" y=".5" width="14" height="8" rx="2" fill="#f2f4f7" stroke="#4a5360" /><path d="M5 6h5L7.500 3z" fill="#333" /></svg>
            <Arrow color="#222" />
          </RibbonToggle>
        </TabBar>
        <RibbonSection />
        <OptionsBar />
        <Workspace>
          <Dock>
            <PropertiesPanel />
            <BrowserPanel />
          </Dock>
          <Splitter />
          <DrawingView />
        </Workspace>
        <StatusBar />
        <TornEdge />
      </Page>
    </>
  );
}
